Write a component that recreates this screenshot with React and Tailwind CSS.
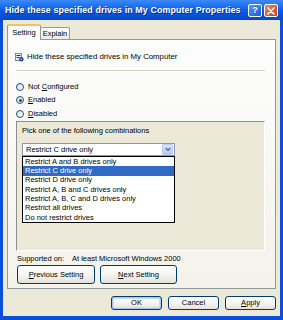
import React from "react";

const F = { fontFamily: '"Liberation Sans", Arial, sans-serif' };

function U({ children }) {
  return <span className="underline underline-offset-[1px]">{children}</span>;
}

function Radio({ checked, children }) {
  return (
    <div className="flex items-center gap-[4px] h-full">
      <div className="w-[8px] h-[8px] rounded-full border border-[#1C5180] bg-linear-to-br from-[#DCDCD6] to-white flex items-center justify-center">
        {checked && <div className="w-[3px] h-[3px] rounded-full bg-[#2C4A3A]" />}
      </div>
      <span className="text-[7.5px] leading-none text-black">{children}</span>
    </div>
  );
}

function Btn({ children, className = "", focus = false }) {
  return (
    <div
      className={
        "rounded-[3px] border border-[#003C74] bg-linear-to-b from-white via-[#F6F5F1] to-[#E3E2DA] flex items-center justify-center text-[7.5px] leading-none text-black " +
        (focus ? "shadow-[inset_0_0_0_1px_#A9C6F4,inset_0_0_0_2px_#CEDDF7] " : "") +
        className
      }
    >
      {children}
    </div>
  );
}

const items = [
  "Restrict A and B drives only",
  "Restrict C drive only",
  "Restrict D drive only",
  "Restrict A, B and C drives only",
  "Restrict A, B, C and D drives only",
  "Restrict all drives",
  "Do not restrict drives",
];

export default function App() {
  return (
    <div style={F} className="w-[283px] h-[320px] bg-[#0A4FD8] flex flex-col overflow-hidden">
      {/* title bar */}
      <div className="h-[20px] shrink-0 bg-linear-to-b from-[#3D8AF7] via-[#0A5CEB] to-[#0747C6] flex items-center pl-[5px] pr-[5px]">
        <span className="flex-1 text-white font-bold text-[8.9px] leading-none tracking-[0.1px] whitespace-nowrap [text-shadow:1px_1px_0_#0A2A8A]">
          Hide these specified drives in My Computer Properties
        </span>
        <div className="flex gap-[2px] mt-[1px]">
          <div className="w-[14px] h-[13px] rounded-[2px] border border-white bg-linear-to-br from-[#5C95F7] to-[#1E55DA] flex items-center justify-center text-white font-bold text-[9px] leading-none">
            ?
          </div>
          <div className="w-[14px] h-[13px] rounded-[2px] border border-white bg-linear-to-br from-[#E9876A] to-[#C93A12] flex items-center justify-center">
            <svg width="8" height="8" viewBox="0 0 8 8">
              <path d="M1 1 L7 7 M7 1 L1 7" stroke="white" strokeWidth="1.6" strokeLinecap="round" />
            </svg>
          </div>
        </div>
      </div>

      {/* body */}
      <div className="flex-1 mx-[3px] mb-[4px] bg-[#ECE9D8] flex flex-col px-[4px] pt-[4px]">
        {/* tabs */}
        <div className="flex items-end h-[16px] -mb-px relative z-10">
          <div className="w-[34px] h-[16px] border border-[#919B9C] border-b-0 border-t-2 border-t-[#F7C25A] rounded-t-[2px] bg-[#FCFCFE] flex items-center justify-center text-[7.5px] leading-none pb-[1px]">
            Setting
          </div>
          <div className="w-[29px] h-[12px] mb-px border border-[#919B9C] border-l-0 border-b-0 rounded-t-[2px] bg-linear-to-b from-white to-[#ECEBE6] flex items-center justify-center text-[7.5px] leading-none">
            Explain
          </div>
        </div>

        {/* tab panel */}
        <div className="h-[250px] border border-[#919B9C] bg-linear-to-b from-[#FDFDFD] to-[#F3F2EB] flex flex-col pl-[8px] pr-[10px] pt-[11px]">
          <div className="h-[12px] flex items-center gap-[3px] -ml-[1px]">
            <svg width="9" height="9" viewBox="0 0 9 9">
              <rect x="0.5" y="0.5" width="6" height="7" fill="#E8ECF4" stroke="#5B6478" strokeWidth="0.7" />
              <rect x="1.5" y="2" width="4" height="1" fill="#2B3A6A" />
              <rect x="1.5" y="4" width="3" height="1" fill="#2B3A6A" />
              <circle cx="6.3" cy="6.3" r="2.2" fill="#1F3F8C" />
              <circle cx="6.3" cy="6.3" r="0.8" fill="#D8E0F0" />
            </svg>
            <span className="text-[7.8px] leading-none">Hide these specified drives in My Computer</span>
          </div>
          <div className="mt-[7px] h-[2px] border-t border-[#D5D2C6] border-b border-b-white" />
          <div className="mt-[8px] h-[13px]">
            <Radio>
              Not <U>C</U>onfigured
            </Radio>
          </div>
          <div className="h-[14px]">
            <Radio checked>
              <U>E</U>nabled
            </Radio>
          </div>
          <div className="h-[13px]">
            <Radio>
              <U>D</U>isabled
            </Radio>
          </div>

          {/* group box */}
          <div className="mt-[1px] h-[130px] border border-t-[#8F8F8A] border-l-[#8F8F8A] border-r-white border-b-white bg-[#ECE9D8] flex flex-col pl-[5px] pt-[4px]">
            <div className="h-[10px] flex items-center text-[7.5px] leading-none">
              Pick one of the following combinations
            </div>
            <div className="mt-[7px] w-[153px] h-[13px] border border-[#7F9DB9] bg-white flex items-center pl-[3px] pr-px">
              <span className="flex-1 text-[7.5px] leading-none">Restrict C drive only</span>
              <div className="w-[11px] h-[11px] rounded-[1px] bg-linear-to-b from-[#D8E4FD] to-[#B5C9F7] border border-[#B9CCF5] flex items-center justify-center">
                <svg width="6" height="5" viewBox="0 0 6 5">
                  <path d="M0.8 1 L3 3.4 L5.2 1" stroke="#4D6185" strokeWidth="1.3" fill="none" />
                </svg>
              </div>
            </div>
            <div className="w-[153px] h-[67px] border border-black bg-white flex flex-col">
              {items.map((t, i) => (
                <div
                  key={t}
                  className={
                    "h-[9.3px] flex items-center pl-[2px] text-[7.5px] leading-none " +
                    (i === 1 ? "bg-[#316AC5] text-white" : "text-black")
                  }
                >
                  {t}
                </div>
              ))}
            </div>
          </div>

          <div className="mt-[2px] h-[12px] flex items-center text-[7.5px] leading-none pl-px">
            <span className="w-[55px]">Supported on:</span>
            <span>At least Microsoft Windows 2000</span>
          </div>
          <div className="h-[19px] flex gap-[5px] pl-px">
            <Btn className="w-[78px] h-[19px]">
              <U>P</U>revious Setting
            </Btn>
            <Btn className="w-[77px] h-[19px]">
              <U>N</U>ext Setting
            </Btn>
          </div>
        </div>

        {/* footer */}
        <div className="mt-[7px] flex justify-end gap-[6px] pr-0">
          <Btn focus className="w-[51px] h-[14px]">OK</Btn>
          <Btn className="w-[51px] h-[14px]">Cancel</Btn>
          <Btn className="w-[51px] h-[14px]">
            <U>A</U>pply
          </Btn>
        </div>
      </div>
    </div>
  );
}
